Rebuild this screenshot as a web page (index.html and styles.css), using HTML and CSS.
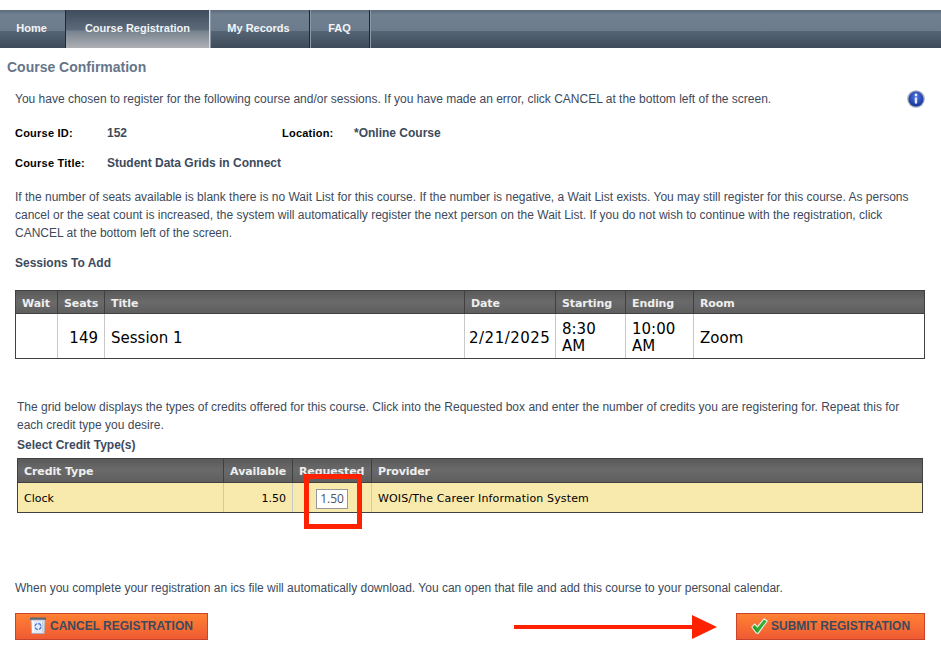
FILE: index.html
```html
<!DOCTYPE html>
<html lang="en">
<head>
<meta charset="utf-8">
<title>Course Confirmation</title>
<link rel="stylesheet" href="styles.css">
</head>
<body>
<nav class="nav">
  <a class="tab tab-home">Home</a>
  <a class="tab tab-active">Course Registration</a>
  <a class="tab tab-records">My Records</a>
  <a class="tab tab-faq">FAQ</a>
</nav>
<h1 class="page-title">Course Confirmation</h1>
<div class="intro">
  <p class="text">You have chosen to register for the following course and/or sessions. If you have made an error, click CANCEL at the bottom left of the screen.</p>
  <svg class="info" width="18" height="18" viewBox="0 0 18 18"><defs><radialGradient id="ig" cx="50%" cy="35%" r="65%"><stop offset="0" stop-color="#4f79e0"/><stop offset="1" stop-color="#12309a"/></radialGradient></defs><circle cx="9" cy="9" r="8.8" fill="#a4abba"/><circle cx="9" cy="9" r="7.5" fill="url(#ig)"/><circle cx="9" cy="5" r="1.4" fill="#e6ecff"/><path d="M7.700 7.600h2.500l-.1 5.800H7.800z" fill="#e6ecff"/></svg>
</div>
<div class="meta">
  <span class="label">Course ID:</span><span class="value val-id">152</span><span class="label label-loc">Location:</span><span class="value">*Online Course</span>
</div>
<div class="meta meta-title">
  <span class="label">Course Title:</span><span class="value">Student Data Grids in Connect</span>
</div>
<p class="text para">If the number of seats available is blank there is no Wait List for this course. If the number is negative, a Wait List exists. You may still register for this course. As persons cancel or the seat count is increased, the system will automatically register the next person on the Wait List. If you do not wish to continue with the registration, click CANCEL at the bottom left of the screen.</p>
<h2 class="section">Sessions To Add</h2>
<table class="grid sessions">
  <colgroup><col class="c-wait"><col class="c-seats"><col class="c-title"><col class="c-date"><col class="c-start"><col class="c-end"><col></colgroup>
  <thead><tr><th>Wait</th><th>Seats</th><th>Title</th><th>Date</th><th>Starting</th><th>Ending</th><th>Room</th></tr></thead>
  <tbody><tr><td></td><td class="num">149</td><td>Session 1</td><td class="date">2/21/2025</td><td>8:30 AM</td><td>10:00 AM</td><td>Zoom</td></tr></tbody>
</table>
<p class="text credit-text">The grid below displays the types of credits offered for this course. Click into the Requested box and enter the number of credits you are registering for. Repeat this for each credit type you desire.</p>
<h2 class="section credit-head">Select Credit Type(s)</h2>
<div class="credit-wrap">
  <table class="grid credits">
    <colgroup><col class="c-type"><col class="c-avail"><col class="c-req"><col></colgroup>
    <thead><tr><th>Credit Type</th><th class="num">Available</th><th>Requested</th><th>Provider</th></tr></thead>
    <tbody><tr><td>Clock</td><td class="num">1.50</td><td class="req"><input class="req-input" value="1.50"></td><td class="provider">WOIS/The Career Information System</td></tr></tbody>
  </table>
  <div class="highlight"></div>
</div>
<p class="text ics">When you complete your registration an ics file will automatically download. You can open that file and add this course to your personal calendar.</p>
<div class="actions">
  <button class="btn btn-cancel">
    <svg class="btn-icon" width="16" height="17" viewBox="0 0 16 17"><path d="M0 .5h16V3H0z" fill="#5b6470"/><path d="M1 3h14l-.8 13.500H1.800z" fill="#e4ebf8" stroke="#a7afc0" stroke-width=".8"/><path d="M3 4v11.500" stroke="#fff" stroke-width="1.400"/><path d="M12.800 4v11.500" stroke="#b9c3d6" stroke-width="1"/><circle cx="8" cy="9.500" r="3" fill="none" stroke="#4a78d8" stroke-width="1.300" stroke-dasharray="3.500 1.200"/></svg>
    CANCEL REGISTRATION</button>
  <div class="submit-group">
    <svg class="arrow" width="203" height="24" viewBox="0 0 203 24"><path d="M0 10h178v-10l25 12-25 12v-10H0z" fill="#ff2200"/></svg>
    <button class="btn btn-submit">
      <svg class="btn-icon" width="17" height="16" viewBox="0 0 17 16"><path d="M.8 9l2.700-3 3 2.800L13 .8l3.300 2.200L7.200 15.300H5.500z" fill="#35ad35" stroke="#e6f2e4" stroke-width="1.100" stroke-linejoin="round"/><path d="M2.500 9l3.500 4.500" stroke="#1d7a24" stroke-width="1"/></svg>
      SUBMIT REGISTRATION</button>
  </div>
</div>
</body>
</html>
```
FILE: styles.css
```css
* { box-sizing: border-box; }
html, body { margin: 0; padding: 0; }
body { width: 941px; height: 648px; overflow: hidden; background: #fff; font-family: "Liberation Sans", Arial, sans-serif; font-size: 12px; color: #3d4a5c; }

.nav { display: flex; height: 38px; margin-top: 10px; background: linear-gradient(#5c6b7c 0, #708090 12%, #6b7b8c 54%, #556474 56%, #3d4a59 100%); }
.tab { display: flex; align-items: center; justify-content: center; height: 38px; font-size: 11px; font-weight: bold; color: #f2f4f6; padding-bottom: 3px; border-right: 1px solid #23282e; box-shadow: 1px 0 0 #8b97a4; }
.tab-home { width: 66px; padding-right: 2px; }
.tab-active { width: 144px; background: linear-gradient(#3f4c5c 0, #5c6a7a 52%, #78838f 56%, #adb0b4 100%); border-right: 1px solid #d8dadc; }
.tab-records { width: 100px; padding-right: 2px; }
.tab-faq { width: 60px; }

.page-title { margin: 11px 0 0 7px; font-size: 14px; line-height: 16px; font-weight: bold; color: #66758a; }
.text { margin: 0; font-size: 12px; line-height: 18px; color: #3d4a5c; }
.intro { display: flex; justify-content: space-between; align-items: center; margin: 15px 16px 0 15px; height: 18px; }
.info { flex: none; }

.meta { display: flex; margin: 18px 0 0 15px; line-height: 14px; font-size: 12px; font-weight: bold; }
.meta-title { margin-top: 16px; }
.label { width: 92px; color: #000; font-size: 11px; letter-spacing: .22px; }
.label-loc { width: 72px; }
.value { color: #3d4a5c; }
.val-id { width: 175px; }

.para { margin: 18px 15px 0 15px; }
.section { margin: 14px 0 0 15px; font-size: 12px; line-height: 14px; font-weight: bold; color: #3d4a5c; }

.grid { border-collapse: collapse; table-layout: fixed; font-family: "DejaVu Sans", Verdana, sans-serif; color: #000; }
.grid th { height: 24px; padding: 2px 6px 0; text-align: left; font-size: 11px; font-weight: bold; letter-spacing: -.1px; color: #eee; background: linear-gradient(#5a5a5a, #6a6a6a 45%, #5e5e5e); border: 1px solid #404040; }
.grid td { padding: 0 6px; border-left: 1px solid #c8c8c8; border-top: 1px solid #404040; border-bottom: 1px solid #404040; }
.grid td:first-child { border-left: 1px solid #404040; }
.grid td:last-child { border-right: 1px solid #404040; }
.num { text-align: right; }
.grid th.num { text-align: right; }

.sessions { width: 910px; margin: 20px 0 0 15px; }
.sessions th { height: 23px; }
.sessions td { height: 45px; padding-top: 4px; font-size: 15px; line-height: 17px; }
.grid td.date { padding: 4px 4px 0; letter-spacing: .5px; }
.c-wait { width: 42px; } .c-seats { width: 47px; } .c-title { width: 360px; } .c-date { width: 91px; } .c-start { width: 70px; } .c-end { width: 68px; }

.credit-text { margin: 39px 17px 0 17px; }
.credit-head { margin: 4px 0 0 17px; }

.credit-wrap { position: relative; width: 906px; margin: 6px 0 0 17px; }
.credits { width: 906px; }
.credits td { height: 30px; padding-top: 2px; font-size: 11px; background: #f8e9ad; }
.credits td.provider { letter-spacing: .15px; }
.c-type { width: 206px; } .c-avail { width: 69px; } .c-req { width: 79px; }
.req { text-align: center; }
.req-input { display: inline-block; vertical-align: middle; width: 32px; height: 20px; padding: 0; text-align: center; font-family: "Open Sans", "Liberation Sans", sans-serif; font-size: 12px; color: #4a5468; background: #fff; border: 1px solid #999; border-radius: 0; }
.highlight { position: absolute; left: 287px; top: 16px; width: 58px; height: 55px; border: 5px solid #ff2200; }

.ics { margin: 66px 15px 0 15px; }
.actions { display: flex; justify-content: space-between; align-items: center; margin: 16px 16px 0 15px; }
.submit-group { display: flex; align-items: center; gap: 19px; }
.btn { display: flex; align-items: center; gap: 3px; height: 27px; padding: 0 0 2px 14px; font-family: "Liberation Sans", Arial, sans-serif; font-size: 12px; font-weight: bold; color: #3d4a5c; background: linear-gradient(#ff8133, #f05a33); border: 1px solid #c8442a; border-radius: 0; }
.btn-cancel { width: 193px; gap: 4px; }
.btn-submit { width: 189px; }
.arrow { flex: none; }
```
